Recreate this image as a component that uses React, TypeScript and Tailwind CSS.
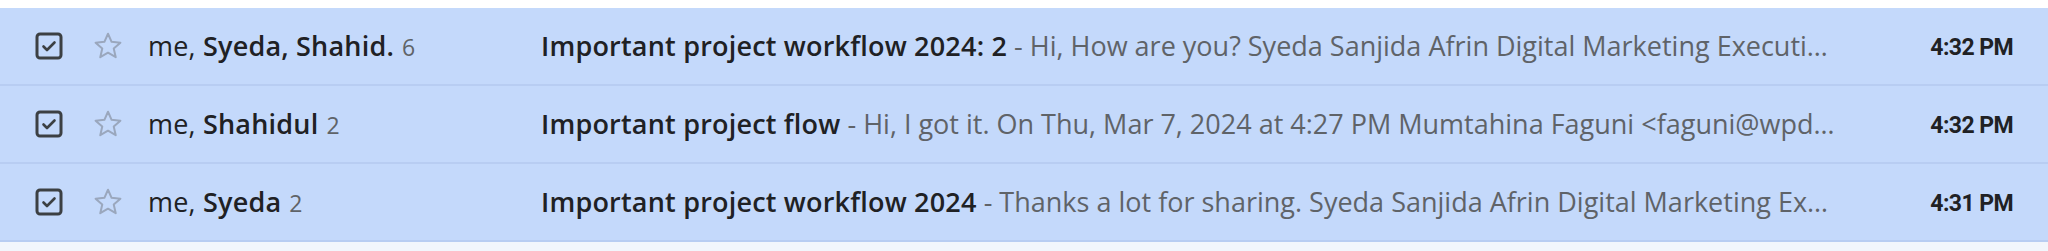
import React from "react";

type Mail = {
  names: { text: string; bold: boolean }[];
  count: number;
  subject: string;
  snippet: string;
  time: string;
};

const MAILS: Mail[] = [
  {
    names: [
      { text: "me, ", bold: false },
      { text: "Syeda, Shahid.", bold: true },
    ],
    count: 6,
    subject: "Important project workflow 2024: 2",
    snippet: "Hi, How are you? Syeda Sanjida Afrin Digital Marketing Executi…",
    time: "4:32 PM",
  },
  {
    names: [
      { text: "me, ", bold: false },
      { text: "Shahidul", bold: true },
    ],
    count: 2,
    subject: "Important project flow",
    snippet: "Hi, I got it. On Thu, Mar 7, 2024 at 4:27 PM Mumtahina Faguni <faguni@wpd…",
    time: "4:32 PM",
  },
  {
    names: [
      { text: "me, ", bold: false },
      { text: "Syeda", bold: true },
    ],
    count: 2,
    subject: "Important project workflow 2024",
    snippet: "Thanks a lot for sharing. Syeda Sanjida Afrin Digital Marketing Ex…",
    time: "4:31 PM",
  },
];

function CheckedBox() {
  return (
    <svg width="28" height="28" viewBox="0 0 28 28" fill="none">
      <rect x="2" y="2" width="24" height="24" rx="3" stroke="#3c4043" strokeWidth="3" />
      <path d="M8.5 14.5l3.5 3.5 7.5-7.5" stroke="#3c4043" strokeWidth="2.6" strokeLinecap="round" strokeLinejoin="round" />
    </svg>
  );
}

function Star() {
  return (
    <svg width="32" height="32" viewBox="0 0 24 24" fill="none">
      <path
        d="M12 2.8l2.7 6.1 6.6.6-5 4.4 1.5 6.5L12 17l-5.8 3.4 1.5-6.5-5-4.4 6.6-.6z"
        stroke="#9aa7bd"
        strokeWidth="1.5"
        strokeLinejoin="round"
      />
    </svg>
  );
}

function MailRow({ mail }: { mail: Mail }) {
  return (
    <div className="flex h-[78px] items-center border-b-2 border-[#b8cdf2] bg-[#c4d9fb]">
      <div className="flex w-[148px] shrink-0 items-center pl-[35px]">
        <CheckedBox />
        <div className="ml-[29px] -mt-[1px]">
          <Star />
        </div>
      </div>
      <div className="w-[393px] shrink-0 truncate font-['Open_Sans',sans-serif] text-[27px] tracking-[0.2px] text-[#202124]">
        {mail.names.map((n, i) => (
          <span key={i} className={n.bold ? "font-semibold" : ""}>
            {n.text}
          </span>
        ))}
        <span className="ml-[8px] text-[23px] text-[#5f6368]">{mail.count}</span>
      </div>
      <div className="min-w-0 flex-1 truncate font-['Open_Sans',sans-serif] text-[27px]">
        <span className="font-semibold tracking-[0.2px] text-[#202124]">{mail.subject}</span>
        <span className="text-[#5f6368]"> - {mail.snippet}</span>
      </div>
      <div className="w-[150px] shrink-0 pr-[35px] pt-[4px] text-right text-[23px] font-bold tracking-tight text-[#202124]">
        {mail.time}
      </div>
    </div>
  );
}

export default function App() {
  return (
    <div className="h-[251px] w-[2048px] bg-white pt-[8px] font-['Roboto',sans-serif]">
      {MAILS.map((m, i) => (
        <MailRow key={i} mail={m} />
      ))}
      <div className="h-[9px] bg-[#f2f6fc]" />
    </div>
  );
}
